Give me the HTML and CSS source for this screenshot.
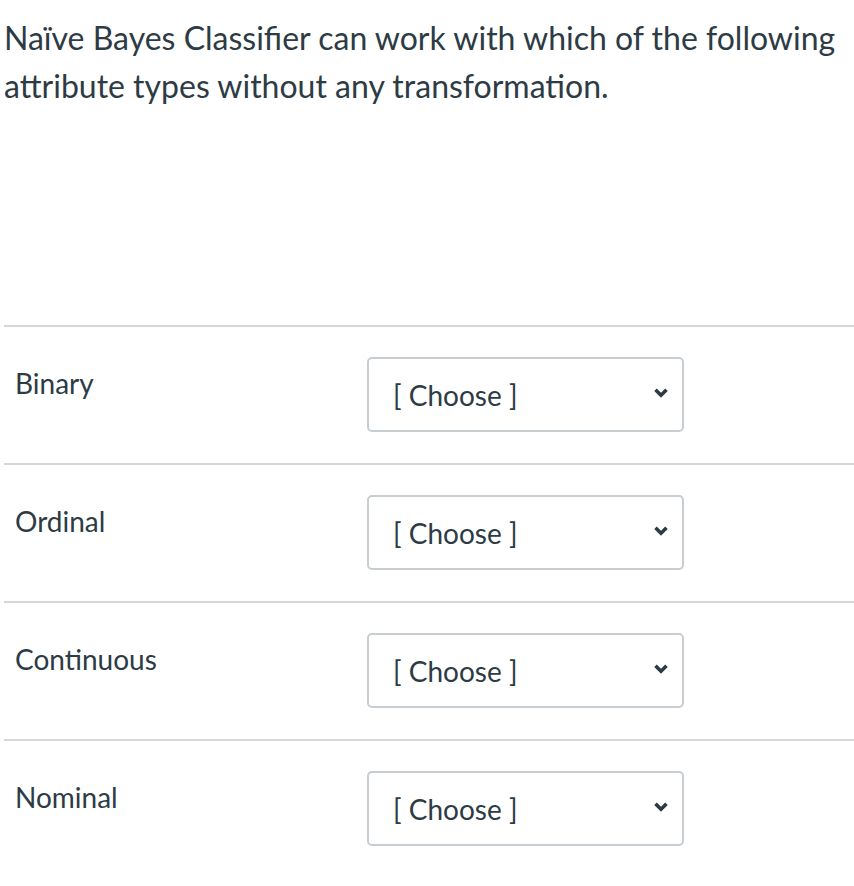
FILE: index.html
```html
<!DOCTYPE html>
<html>
<head>
<meta charset="utf-8">
<link rel="stylesheet" href="styles.css">
</head>
<body>
<div class="question">
  <p class="title">Naïve Bayes Classifier can work with which of the following attribute types without any transformation.</p>
  <div class="answers">
    <div class="row">
      <div class="label">Binary</div>
      <div class="select"><span>[ Choose ]</span><svg class="chev" width="14" height="10" viewBox="0 0 14 10"><polyline points="1.5,1.8 7,7.2 12.5,1.8" fill="none" stroke="#2d3b45" stroke-width="3.6"/></svg></div>
    </div>
    <div class="row">
      <div class="label">Ordinal</div>
      <div class="select"><span>[ Choose ]</span><svg class="chev" width="14" height="10" viewBox="0 0 14 10"><polyline points="1.5,1.8 7,7.2 12.5,1.8" fill="none" stroke="#2d3b45" stroke-width="3.6"/></svg></div>
    </div>
    <div class="row">
      <div class="label">Continuous</div>
      <div class="select"><span>[ Choose ]</span><svg class="chev" width="14" height="10" viewBox="0 0 14 10"><polyline points="1.5,1.8 7,7.2 12.5,1.8" fill="none" stroke="#2d3b45" stroke-width="3.6"/></svg></div>
    </div>
    <div class="row">
      <div class="label">Nominal</div>
      <div class="select"><span>[ Choose ]</span><svg class="chev" width="14" height="10" viewBox="0 0 14 10"><polyline points="1.5,1.8 7,7.2 12.5,1.8" fill="none" stroke="#2d3b45" stroke-width="3.6"/></svg></div>
    </div>
  </div>
</div>
</body>
</html>
```
FILE: styles.css
```css
html, body {
  margin: 0;
  padding: 0;
  background: #ffffff;
}
body {
  font-family: Lato, "Liberation Sans", sans-serif;
  color: #2d3b45;
}
.question {
  padding-left: 4px;
}
.title {
  margin: 14px 0 0 0;
  font-size: 32px;
  line-height: 48px;
  padding-right: 4px;
}
.answers {
  margin-top: 215px;
}
.row {
  display: flex;
  align-items: flex-start;
  border-top: 2px solid #d7d7d7;
  padding: 30px 0 31px 11px;
}
.label {
  width: 352px;
  font-size: 28px;
  line-height: 36px;
  padding-top: 8px;
}
.select {
  box-sizing: border-box;
  width: 317px;
  height: 75px;
  border: 2px solid #c7cdd1;
  border-radius: 5px;
  display: flex;
  align-items: center;
  justify-content: space-between;
  padding: 0 14px 0 24px;
  font-size: 28px;
}
.chev {
  display: block;
  margin-top: -4px;
}
```
